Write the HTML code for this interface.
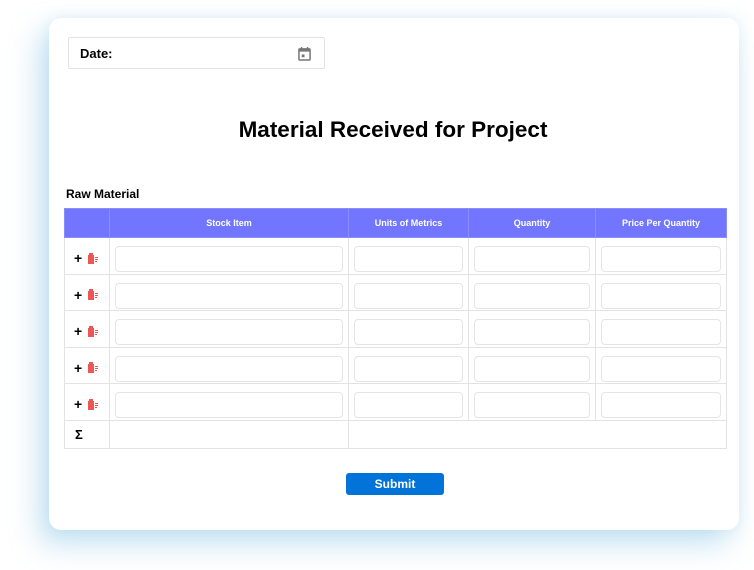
<!DOCTYPE html>
<html><head><style>
body{margin:0;width:754px;height:570px;background:#fff;font-family:"Liberation Sans",sans-serif;position:relative;overflow:hidden}
.card{position:absolute;left:49px;top:18px;width:690px;height:512px;background:#fff;border-radius:12px;box-shadow:-10px 14px 30px rgba(110,185,225,.4),0 0 14px rgba(150,200,230,.25)}
.abs{position:absolute}
.date{left:68px;top:37px;width:255px;height:30px;border:1px solid #e3e3e3;border-radius:2px}
.date span{position:absolute;left:11px;top:8px;font-size:13px;font-weight:bold}
h1{position:absolute;left:0;width:786px;top:117px;margin:0;text-align:center;font-size:22.5px;font-weight:bold}
.rm{left:66px;top:187px;font-size:12px;font-weight:bold}
table{position:absolute;left:64px;top:208px;border-collapse:collapse;table-layout:fixed}
td,th{border:1px solid #e3e3e3;padding:0}
th{background:#7276fe;color:#fff;font-size:9px;font-weight:bold;height:28px;border-color:#8a8dfc}
td.r{height:35.6px;vertical-align:top}
td.r .in{margin-top:8px}
.in{height:24px;border:1px solid #e5e5e5;border-radius:4px;margin:0 5px}
.ic{display:flex;align-items:center;padding-left:9px;gap:6px;font-weight:bold;font-size:14px;margin-top:12px}
.sub{left:346px;top:473px;width:98px;height:22px;background:#0274d9;border-radius:3px;color:#fff;font-size:12px;font-weight:bold;text-align:center;line-height:22px}
</style></head><body>
<div class="card"></div>
<div class="abs date"><span>Date:</span>
<svg class="abs" style="left:229px;top:8px" width="13" height="15" viewBox="0 0 14 16"><rect x="1" y="3" width="12" height="12" rx="1" fill="none" stroke="#777" stroke-width="1.6"/><rect x="1" y="3" width="12" height="3" fill="#777"/><rect x="3" y="1" width="1.5" height="3" fill="#777"/><rect x="9.5" y="1" width="1.5" height="3" fill="#777"/><rect x="4" y="9" width="3" height="3" fill="#777"/></svg></div>
<h1>Material Received for Project</h1>
<div class="abs rm">Raw Material</div>
<table>
<colgroup><col style="width:45px"><col style="width:239px"><col style="width:120px"><col style="width:127px"><col style="width:131px"></colgroup>
<tr><th></th><th>Stock Item</th><th>Units of Metrics</th><th>Quantity</th><th>Price Per Quantity</th></tr>
<tr><td class="r"><div class="ic">+<svg width="11" height="11" viewBox="0 0 11 11"><rect x="0" y="2" width="6" height="9" fill="#ee5555"/><rect x="1" y="0" width="4" height="2" fill="#ee5555"/><rect x="7" y="4" width="3" height="1" fill="#ee5555"/><rect x="7" y="6" width="3" height="1" fill="#ee5555"/><rect x="7" y="8" width="2" height="1" fill="#ee5555"/></svg></div></td><td class="r"><div class="in"></div></td><td class="r"><div class="in"></div></td><td class="r"><div class="in"></div></td><td class="r"><div class="in"></div></td></tr>
<tr><td class="r"><div class="ic">+<svg width="11" height="11" viewBox="0 0 11 11"><rect x="0" y="2" width="6" height="9" fill="#ee5555"/><rect x="1" y="0" width="4" height="2" fill="#ee5555"/><rect x="7" y="4" width="3" height="1" fill="#ee5555"/><rect x="7" y="6" width="3" height="1" fill="#ee5555"/><rect x="7" y="8" width="2" height="1" fill="#ee5555"/></svg></div></td><td class="r"><div class="in"></div></td><td class="r"><div class="in"></div></td><td class="r"><div class="in"></div></td><td class="r"><div class="in"></div></td></tr>
<tr><td class="r"><div class="ic">+<svg width="11" height="11" viewBox="0 0 11 11"><rect x="0" y="2" width="6" height="9" fill="#ee5555"/><rect x="1" y="0" width="4" height="2" fill="#ee5555"/><rect x="7" y="4" width="3" height="1" fill="#ee5555"/><rect x="7" y="6" width="3" height="1" fill="#ee5555"/><rect x="7" y="8" width="2" height="1" fill="#ee5555"/></svg></div></td><td class="r"><div class="in"></div></td><td class="r"><div class="in"></div></td><td class="r"><div class="in"></div></td><td class="r"><div class="in"></div></td></tr>
<tr><td class="r"><div class="ic">+<svg width="11" height="11" viewBox="0 0 11 11"><rect x="0" y="2" width="6" height="9" fill="#ee5555"/><rect x="1" y="0" width="4" height="2" fill="#ee5555"/><rect x="7" y="4" width="3" height="1" fill="#ee5555"/><rect x="7" y="6" width="3" height="1" fill="#ee5555"/><rect x="7" y="8" width="2" height="1" fill="#ee5555"/></svg></div></td><td class="r"><div class="in"></div></td><td class="r"><div class="in"></div></td><td class="r"><div class="in"></div></td><td class="r"><div class="in"></div></td></tr>
<tr><td class="r"><div class="ic">+<svg width="11" height="11" viewBox="0 0 11 11"><rect x="0" y="2" width="6" height="9" fill="#ee5555"/><rect x="1" y="0" width="4" height="2" fill="#ee5555"/><rect x="7" y="4" width="3" height="1" fill="#ee5555"/><rect x="7" y="6" width="3" height="1" fill="#ee5555"/><rect x="7" y="8" width="2" height="1" fill="#ee5555"/></svg></div></td><td class="r"><div class="in"></div></td><td class="r"><div class="in"></div></td><td class="r"><div class="in"></div></td><td class="r"><div class="in"></div></td></tr>
<tr><td style="height:27px"><div style="font-weight:bold;font-size:13px;padding-left:10px">Σ</div></td><td></td><td colspan="3"></td></tr>
</table>
<div class="abs sub">Submit</div>
</body></html>
